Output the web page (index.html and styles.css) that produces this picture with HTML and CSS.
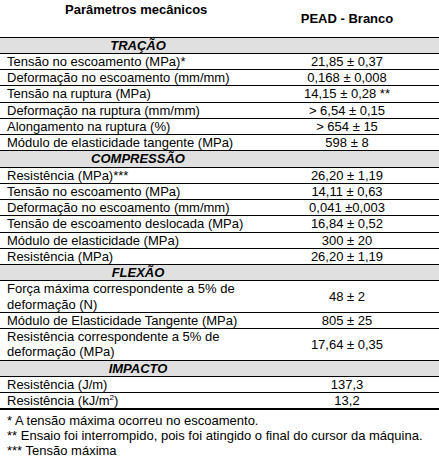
FILE: index.html
```html
<!DOCTYPE html>
<html lang="pt">
<head>
<meta charset="utf-8">
<title>Parâmetros mecânicos</title>
<link rel="stylesheet" href="styles.css">
</head>
<body>
<table class="props">
  <thead>
    <tr class="head">
      <th class="head-left">Parâmetros mecânicos</th>
      <th class="head-right">PEAD - Branco</th>
    </tr>
  </thead>
  <tbody>
    <tr class="section"><td colspan="2">TRAÇÃO</td></tr>
    <tr><td class="lbl">Tensão no escoamento (MPa)*</td><td class="val">21,85 ± 0,37</td></tr>
    <tr><td class="lbl">Deformação no escoamento (mm/mm)</td><td class="val">0,168 ± 0,008</td></tr>
    <tr><td class="lbl">Tensão na ruptura (MPa)</td><td class="val">14,15 ± 0,28 **</td></tr>
    <tr><td class="lbl">Deformação na ruptura (mm/mm)</td><td class="val">&gt; 6,54 ± 0,15</td></tr>
    <tr><td class="lbl">Alongamento na ruptura (%)</td><td class="val">&gt; 654 ± 15</td></tr>
    <tr><td class="lbl">Módulo de elasticidade tangente (MPa)</td><td class="val">598 ± 8</td></tr>
    <tr class="section"><td colspan="2">COMPRESSÃO</td></tr>
    <tr><td class="lbl">Resistência (MPa)***</td><td class="val">26,20 ± 1,19</td></tr>
    <tr><td class="lbl">Tensão no escoamento (MPa)</td><td class="val">14,11 ± 0,63</td></tr>
    <tr><td class="lbl">Deformação no escoamento (mm/mm)</td><td class="val">0,041 ±0,003</td></tr>
    <tr><td class="lbl">Tensão de escoamento deslocada (MPa)</td><td class="val">16,84 ± 0,52</td></tr>
    <tr><td class="lbl">Módulo de elasticidade (MPa)</td><td class="val">300 ± 20</td></tr>
    <tr><td class="lbl">Resistência (MPa)</td><td class="val">26,20 ± 1,19</td></tr>
    <tr class="section"><td colspan="2">FLEXÃO</td></tr>
    <tr><td class="lbl">Força máxima correspondente a 5% de<br>deformação (N)</td><td class="val">48 ± 2</td></tr>
    <tr><td class="lbl">Módulo de Elasticidade Tangente (MPa)</td><td class="val">805 ± 25</td></tr>
    <tr><td class="lbl">Resistência correspondente a 5% de<br>deformação (MPa)</td><td class="val">17,64 ± 0,35</td></tr>
    <tr class="section"><td colspan="2">IMPACTO</td></tr>
    <tr><td class="lbl">Resistência (J/m)</td><td class="val">137,3</td></tr>
    <tr class="last"><td class="lbl">Resistência (kJ/m<sup>2</sup>)</td><td class="val">13,2</td></tr>
  </tbody>
</table>
<div class="notes">
  <p>* A tensão máxima ocorreu no escoamento.</p>
  <p>** Ensaio foi interrompido, pois foi atingido o final do cursor da máquina.</p>
  <p>*** Tensão máxima</p>
</div>
</body>
</html>
```
FILE: styles.css
```css
html, body {
  margin: 0;
  padding: 0;
  background: #ffffff;
}
body {
  font-family: "Liberation Sans", Arial, sans-serif;
  font-size: 13px;
  line-height: 15.25px;
  color: #000000;
  width: 439px;
}
.props {
  width: 439px;
  border-collapse: collapse;
  table-layout: fixed;
}
.props th,
.props td {
  padding: 0;
  font-weight: normal;
  box-sizing: border-box;
}
.head {
  height: 37px;
}
.head th {
  font-weight: bold;
  vertical-align: top;
}
.head-left {
  width: 255px;
  text-align: left;
  padding: 2px 0 0 65px !important;
}
.head-right {
  text-align: center;
  padding-top: 11px !important;
}
.props tbody td {
  border-top: 1px solid #000;
}
.lbl {
  padding-left: 7px !important;
  text-align: left;
  vertical-align: middle;
}
.val {
  text-align: center;
  vertical-align: middle;
}
.section td {
  background: #e0e0e0;
  font-weight: bold;
  font-style: italic;
  text-align: center;
  padding-right: 163px !important;
}
.last td {
  border-bottom: 2px solid #000;
}
sup {
  font-size: 8px;
  line-height: 0;
  vertical-align: 5px;
}
.notes {
  padding: 3px 0 0 7px;
}
.notes p {
  margin: 0;
  line-height: 15px;
}
```
